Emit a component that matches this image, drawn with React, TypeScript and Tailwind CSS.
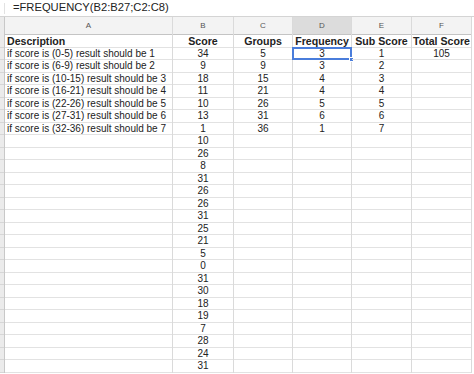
import React from 'react';

const colA = [
  'Description',
  'if score is (0-5) result should be 1',
  'if score is (6-9) result should be 2',
  'if score is (10-15) result should be 3',
  'if score is (16-21) result should be 4',
  'if score is (22-26) result should be 5',
  'if score is (27-31) result should be 6',
  'if score is (32-36) result should be 7',
];
const colB = ['Score', '34', '9', '18', '11', '10', '13', '1', '10', '26', '8', '31', '26', '26', '31', '25', '21', '5', '0', '31', '30', '18', '19', '7', '28', '24', '31'];
const colC = ['Groups', '5', '9', '15', '21', '26', '31', '36'];
const colD = ['Frequency', '3', '3', '4', '4', '5', '6', '1'];
const colE = ['Sub Score', '1', '2', '3', '4', '5', '6', '7'];
const colF = ['Total Score', '105'];

const cols = [
  { key: 'A', data: colA, width: 'w-[168px]', align: 'text-left pl-[2px]' },
  { key: 'B', data: colB, width: 'w-[61px]', align: 'text-center' },
  { key: 'C', data: colC, width: 'w-[59px]', align: 'text-center' },
  { key: 'D', data: colD, width: 'w-[59px]', align: 'text-center' },
  { key: 'E', data: colE, width: 'w-[60px]', align: 'text-center' },
  { key: 'F', data: colF, width: 'w-[60px]', align: 'text-center' },
];

const rows = Array.from({ length: 27 }, (_, i) => i);

export default function App() {
  return (
    <div className="w-[474px] h-[374px] overflow-hidden bg-white text-[#222] font-['Liberation_Sans',Arial,sans-serif]">
      {/* formula bar */}
      <div className="flex h-[17px] items-center border-b border-[#d4d4d4] bg-white">
        <div className="ml-[4px] h-[11px] w-px bg-[#e2e2e2]" />
        <span className="ml-[8px] text-[11.2px] leading-none">=FREQUENCY(B2:B27;C2:C8)</span>
      </div>

      <div className="flex">
        {/* row gutter */}
        <div className="w-[5px] shrink-0 border-r border-[#c8c8c8] bg-[#ebebeb] pt-[18px]">
          {rows.map(i => (
            <div key={i} className={`${i % 2 ? 'h-[12px]' : 'h-[13px]'} border-b border-[#d6d6d6]`} />
          ))}
        </div>

        {cols.map(col => (
          <div key={col.key} className={`${col.width} shrink-0 border-r border-[#dadada]`}>
            <div
              className={`flex h-[18px] items-center justify-center border-b border-[#c4c4c4] text-[8px] text-[#555] ${
                col.key === 'D' ? 'bg-[#dcdcdc]' : 'bg-[#f3f3f3]'
              }`}
            >
              {col.key}
            </div>
            {rows.map(i => {
              const v = col.data[i] ?? '';
              const selected = col.key === 'D' && i === 1;
              return (
                <div
                  key={i}
                  className={`relative ${i % 2 ? 'h-[12px]' : 'h-[13px]'} border-b border-[#e2e2e2] ${col.align} leading-[12px] whitespace-nowrap ${
                    i === 0 ? 'font-bold text-[10.6px]' : 'text-[10px]'
                  }`}
                >
                  {v}
                  {selected && (
                    <>
                      <div className="absolute -left-px -top-px bottom-[-1px] right-[-1px] border-2 border-[#4a7ddb]" />
                      <div className="absolute -right-[3px] -bottom-[3px] h-[5px] w-[5px] border border-white bg-[#4a7ddb]" />
                    </>
                  )}
                </div>
              );
            })}
          </div>
        ))}
      </div>
    </div>
  );
}
